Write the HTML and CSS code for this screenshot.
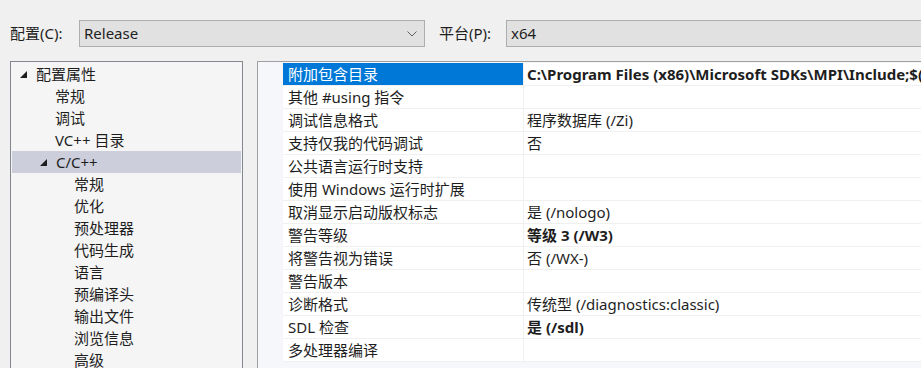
FILE: index.html
```html
<!DOCTYPE html>
<html lang="zh-CN">
<head>
<meta charset="UTF-8">
<title>属性页</title>
<link rel="stylesheet" href="styles.css">
</head>
<body>
<div class="toolbar">
  <label class="field-label">配置(C):</label>
  <div class="combo combo-config">
    <span>Release</span>
    <svg class="chevron" width="10" height="6" viewBox="0 0 10 6"><path d="M0.5 0.5 L5 5 L9.5 0.5" fill="none" stroke="#606060" stroke-width="1"/></svg>
  </div>
  <label class="field-label field-platform">平台(P):</label>
  <div class="combo combo-platform"><span>x64</span></div>
</div>

<div class="main">
  <div class="tree">
    <div class="node lvl0"><svg class="twisty" width="7" height="7" viewBox="0 0 7 7"><path d="M7 0 L7 7 L0 7 Z" fill="#1e1e1e"/></svg>配置属性</div>
    <div class="node lvl1">常规</div>
    <div class="node lvl1">调试</div>
    <div class="node lvl1">VC++ 目录</div>
    <div class="node lvl2 selected"><svg class="twisty" width="7" height="7" viewBox="0 0 7 7"><path d="M7 0 L7 7 L0 7 Z" fill="#1e1e1e"/></svg>C/C++</div>
    <div class="node lvl3">常规</div>
    <div class="node lvl3">优化</div>
    <div class="node lvl3">预处理器</div>
    <div class="node lvl3">代码生成</div>
    <div class="node lvl3">语言</div>
    <div class="node lvl3">预编译头</div>
    <div class="node lvl3">输出文件</div>
    <div class="node lvl3">浏览信息</div>
    <div class="node lvl3">高级</div>
  </div>

  <div class="grid-panel">
    <div class="props">
      <div class="row active"><div class="name">附加包含目录</div><div class="value bold">C:\Program Files (x86)\Microsoft SDKs\MPI\Include;$(IncludePath)</div></div>
      <div class="row"><div class="name">其他 #using 指令</div><div class="value"></div></div>
      <div class="row"><div class="name">调试信息格式</div><div class="value">程序数据库 (/Zi)</div></div>
      <div class="row"><div class="name">支持仅我的代码调试</div><div class="value">否</div></div>
      <div class="row"><div class="name">公共语言运行时支持</div><div class="value"></div></div>
      <div class="row"><div class="name">使用 Windows 运行时扩展</div><div class="value"></div></div>
      <div class="row"><div class="name">取消显示启动版权标志</div><div class="value">是 (/nologo)</div></div>
      <div class="row"><div class="name">警告等级</div><div class="value bold">等级 3 (/W3)</div></div>
      <div class="row"><div class="name">将警告视为错误</div><div class="value">否 (/WX-)</div></div>
      <div class="row"><div class="name">警告版本</div><div class="value"></div></div>
      <div class="row"><div class="name">诊断格式</div><div class="value">传统型 (/diagnostics:classic)</div></div>
      <div class="row"><div class="name">SDL 检查</div><div class="value bold">是 (/sdl)</div></div>
      <div class="row"><div class="name">多处理器编译</div><div class="value"></div></div>
    </div>
  </div>
</div>
</body>
</html>
```

FILE: styles.css
```css
html, body {
  margin: 0;
  height: 368px;
  overflow: hidden;
}

body {
  background: #f0f0f0;
  font-family: "Noto Sans", "Noto Sans CJK SC", sans-serif;
  font-size: 15px;
  color: #1e1e1e;
}

.toolbar {
  display: flex;
  align-items: center;
  padding: 20px 0 0 10px;
  height: 27px;
}

.field-label {
  width: 69px;
  line-height: 27px;
}

.field-platform {
  margin-left: 14px;
  width: 67px;
}

.combo {
  box-sizing: border-box;
  height: 27px;
  background: #e1e1e1;
  border: 1px solid #adadad;
  display: flex;
  align-items: center;
  padding-left: 4px;
  line-height: 25px;
}

.combo-config {
  width: 346px;
  justify-content: space-between;
  padding-right: 7px;
}

.combo-platform {
  flex: 1;
  border-right: none;
}

.chevron {
  display: block;
}

.main {
  display: flex;
  margin-top: 14px;
  padding-left: 10px;
}

.tree {
  box-sizing: border-box;
  width: 233px;
  height: 320px;
  background: #f5f5f5;
  border: 1px solid #828790;
  padding: 1px;
}

.node {
  height: 22px;
  line-height: 22px;
  white-space: nowrap;
  display: flex;
  align-items: center;
}

.twisty {
  display: block;
  margin-right: 9px;
  margin-top: 1px;
}

.lvl0 { padding-left: 8px; }
.lvl1 { padding-left: 43px; }
.lvl2 { padding-left: 28px; }
.lvl3 { padding-left: 62px; }

.node.selected {
  background: #cccedb;
}

.grid-panel {
  flex: 1;
  margin-left: 14px;
  height: 320px;
  background: #f5f7fa;
  border-top: 1px solid #a0a0a0;
  border-left: 1px solid #a0a0a0;
  padding: 1px 0 0 25px;
  overflow: hidden;
}

.props {
  background: #ffffff;
}

.row {
  display: flex;
  height: 22px;
  border-bottom: 1px solid #f0f0f0;
  line-height: 22px;
  white-space: nowrap;
}

.name {
  width: 235px;
  flex: none;
  padding-left: 5px;
  border-right: 1px solid #f0f0f0;
}

.value {
  flex: 1;
  padding-left: 3px;
  overflow: hidden;
}

.bold {
  font-weight: bold;
}

.row.active .name {
  background: #0078d7;
  color: #ffffff;
}
```
